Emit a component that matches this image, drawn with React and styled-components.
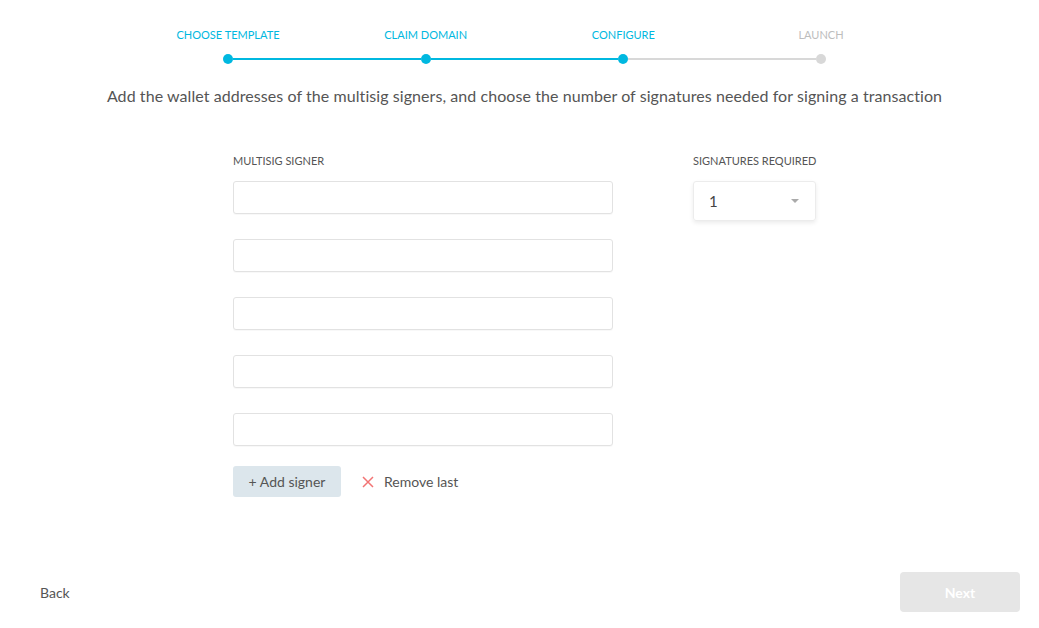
import React, {useState} from 'react';
import styled, {createGlobalStyle} from 'styled-components';

const GlobalStyle = createGlobalStyle`
  html, body {
    margin: 0;
    padding: 0;
    background: #fff;
  }
  body {
    font-family: Lato, "Open Sans", sans-serif;
    color: #555;
  }
`

const BLUE = '#00b8e0';
const GREY = '#d8d8d8';

const Page = styled.div`
  display: flex;
  flex-direction: column;
  min-height: 100vh;
  box-sizing: border-box;
`

const Stepper = styled.div`
  display: grid;
  grid-template-columns: 10px 1fr 10px 1fr 10px 1fr 10px;
  grid-template-rows: auto 10px;
  row-gap: 12px;
  width: 603px;
  margin: 28px auto 0;
  padding-left: 10px;
`

const StepLabel = styled.div`
  grid-row: 1;
  grid-column: ${p => p.col};
  justify-self: center;
  white-space: nowrap;
  font-size: 11px;
  line-height: 14px;
  text-transform: uppercase;
  color: ${p => (p.done ? BLUE : '#bdbdbd')};
`

const Dot = styled.div`
  grid-row: 2;
  width: 10px;
  height: 10px;
  border-radius: 50%;
  background: ${p => (p.done ? BLUE : GREY)};
`

const Segment = styled.div`
  grid-row: 2;
  align-self: center;
  height: 2px;
  background: ${p => (p.done ? BLUE : GREY)};
`

const Intro = styled.p`
  margin: 22px 0 0;
  padding-left: 10px;
  text-align: center;
  font-size: 16px;
  line-height: 20px;
  letter-spacing: 0.07px;
  color: #555;
`

const Form = styled.div`
  display: flex;
  justify-content: center;
  gap: 80px;
  margin-top: 48px;
  padding-left: 10px;
`

const Column = styled.div`
  display: flex;
  flex-direction: column;
  width: ${p => p.width}px;
`

const FieldLabel = styled.div`
  font-size: 11px;
  line-height: 14px;
  white-space: nowrap;
  text-transform: uppercase;
  color: #555;
  margin-bottom: 13px;
`

const Inputs = styled.div`
  display: flex;
  flex-direction: column;
  gap: 25px;
`

const TextInput = styled.input`
  box-sizing: border-box;
  width: 100%;
  height: 33px;
  border: 1px solid #e2e2e2;
  border-radius: 3px;
  box-shadow: 0 1px 1px rgba(0, 0, 0, 0.03);
  padding: 0 12px;
  font-family: inherit;
  font-size: 14px;
  outline: none;
`

const Actions = styled.div`
  display: flex;
  align-items: center;
  gap: 21px;
  margin-top: 20px;
`

const AddButton = styled.button`
  height: 31px;
  width: 108px;
  border: none;
  border-radius: 3px;
  background: #dce6ec;
  color: #555;
  font-family: inherit;
  font-size: 14px;
  cursor: pointer;
`

const RemoveButton = styled.button`
  display: flex;
  align-items: center;
  gap: 10px;
  border: none;
  background: none;
  padding: 0;
  color: #555;
  font-family: inherit;
  font-size: 14px;
  cursor: pointer;
`

const Select = styled.div`
  box-sizing: border-box;
  display: flex;
  align-items: center;
  justify-content: space-between;
  height: 40px;
  padding: 0 16px 0 15px;
  border: 1px solid #ececec;
  border-radius: 3px;
  box-shadow: 0 2px 4px rgba(0, 0, 0, 0.08);
  font-size: 15px;
  color: #444;
`

const Caret = styled.span`
  width: 0;
  height: 0;
  border-left: 4px solid transparent;
  border-right: 4px solid transparent;
  border-top: 4px solid #aaa;
`

const Footer = styled.div`
  display: flex;
  align-items: center;
  justify-content: space-between;
  margin-top: auto;
  padding: 0 19px 16px 40px;
`

const BackButton = styled.button`
  border: none;
  background: none;
  padding: 0;
  font-family: inherit;
  font-size: 14px;
  color: #555;
  cursor: pointer;
`

const NextButton = styled.button`
  width: 120px;
  height: 40px;
  border: none;
  border-radius: 4px;
  background: #e6e6e6;
  color: #fff;
  font-family: inherit;
  font-weight: 700;
  font-size: 14px;
`

const steps = ['Choose template', 'Claim domain', 'Configure', 'Launch'];
const current = 2;

const CrossIcon = () => (
  <svg width="12" height="12" viewBox="0 0 12 12">
    <path d="M1 1 L11 11 M11 1 L1 11" stroke="#f27474" strokeWidth="1.5" fill="none" />
  </svg>
);

const App = () => {
  const [signers, setSigners] = useState(['', '', '', '', '']);

  const cells = [];
  steps.forEach((step, i) => {
    cells.push(<StepLabel key={`l${i}`} col={i * 2 + 1} done={i <= current}>{step}</StepLabel>);
    cells.push(<Dot key={`d${i}`} done={i <= current} />);
    if (i < steps.length - 1) cells.push(<Segment key={`s${i}`} done={i < current} />);
  });

  return (
    <Page>
      <GlobalStyle />
      <Stepper>{cells}</Stepper>
      <Intro>
        Add the wallet addresses of the multisig signers, and choose the number of signatures needed for signing a transaction
      </Intro>
      <Form>
        <Column width={380}>
          <FieldLabel>Multisig signer</FieldLabel>
          <Inputs>
            {signers.map((value, i) => (
              <TextInput
                key={i}
                value={value}
                onChange={e => setSigners(signers.map((v, j) => (j === i ? e.target.value : v)))} />
            ))}
          </Inputs>
          <Actions>
            <AddButton onClick={() => setSigners([...signers, ''])}>+ Add signer</AddButton>
            <RemoveButton onClick={() => setSigners(signers.slice(0, -1))}>
              <CrossIcon />
              Remove last
            </RemoveButton>
          </Actions>
        </Column>
        <Column width={123}>
          <FieldLabel>Signatures required</FieldLabel>
          <Select>
            <span>1</span>
            <Caret />
          </Select>
        </Column>
      </Form>
      <Footer>
        <BackButton>Back</BackButton>
        <NextButton disabled>Next</NextButton>
      </Footer>
    </Page>
  );
}

export default App;
